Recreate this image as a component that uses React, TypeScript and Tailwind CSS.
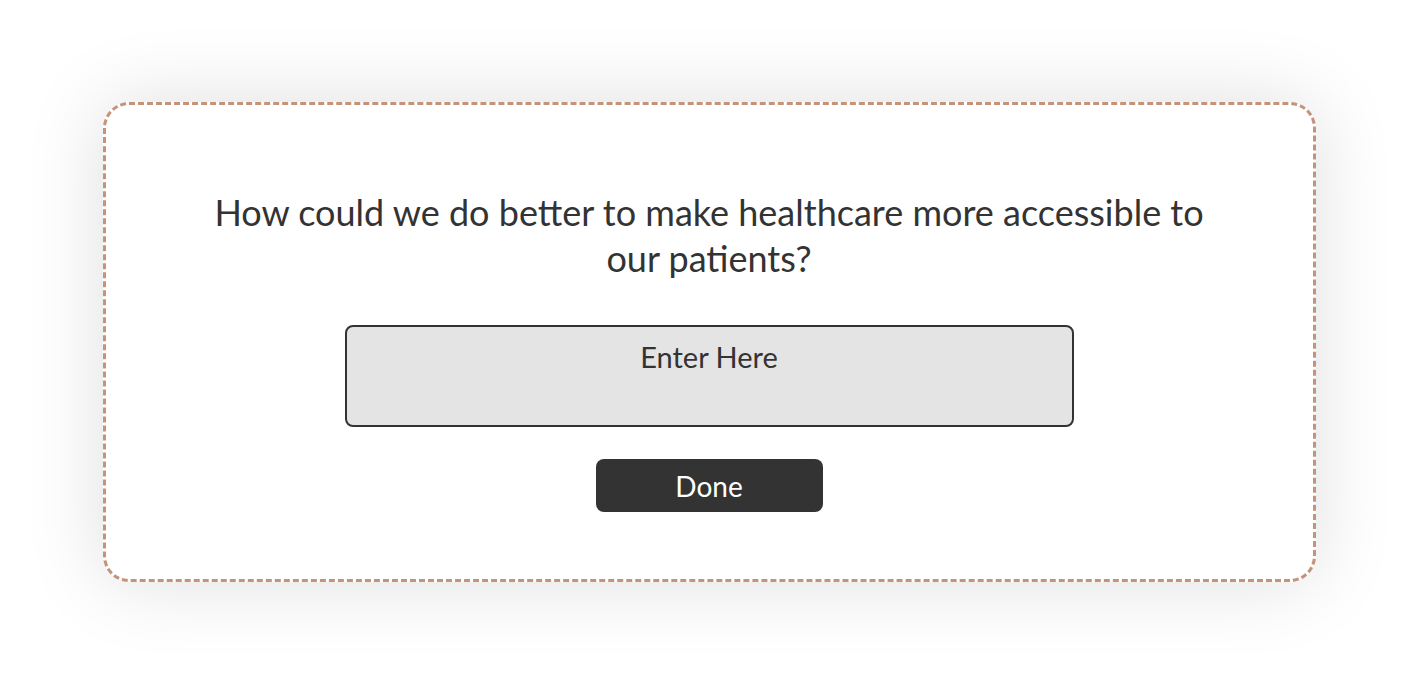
export default function App() {
  return (
    <div
      className="flex h-screen w-full items-center justify-center bg-white"
      style={{ fontFamily: 'Lato, "Noto Sans", sans-serif' }}
    >
      <div className="flex h-[480px] w-[1213px] flex-col items-center rounded-[26px] border-[3px] border-dashed border-[#c4937a] bg-white pt-[84px] shadow-[0_0_80px_rgba(0,0,0,0.13)]">
        <h1 className="text-center text-[36px] font-normal leading-[46px] text-[#333333]">
          How could we do better to make healthcare more accessible to
          <br />
          our patients?
        </h1>

        <textarea
          placeholder="Enter Here"
          className="mt-[44px] h-[102px] w-[729px] resize-none rounded-lg border-2 border-[#333333] bg-[#e4e4e4] px-4 pt-[12px] text-center text-[29px] leading-[35px] text-[#333333] outline-none placeholder:text-[#333333]"
        />

        <button className="mt-8 h-[53px] w-[227px] rounded-lg bg-[#333333] text-[28px] text-white">
          Done
        </button>
      </div>
    </div>
  );
}
